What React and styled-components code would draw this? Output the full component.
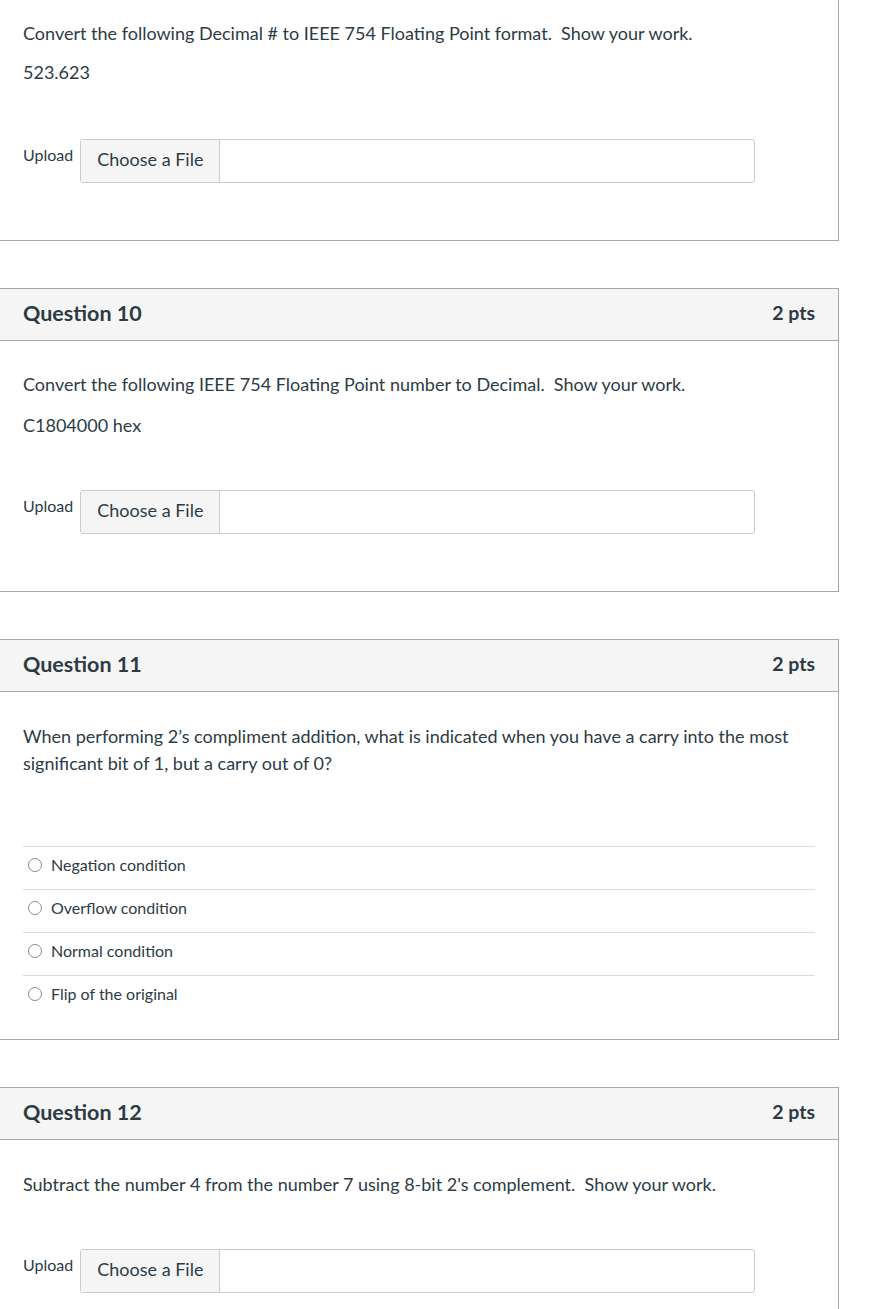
import React from "react";
import styled, { createGlobalStyle } from "styled-components";

const Global = createGlobalStyle`
  html, body { margin: 0; padding: 0; background: #fff; }
  body { font-family: Lato, "Open Sans", "Liberation Sans", sans-serif; color: #2d3b45; }
`;

const Page = styled.div`
  width: 839px;
  display: flex;
  flex-direction: column;
  gap: 47px;
`;

const Card = styled.section`
  border: 1px solid #a8a8a8;
  border-left: none;
  border-top: ${(p) => (p.$partial ? "none" : "1px solid #a8a8a8")};
  background: #fff;
`;

const Header = styled.header`
  height: 47px;
  display: flex;
  align-items: center;
  justify-content: space-between;
  padding: 0 23px 4px;
  background: #f5f5f5;
  border-bottom: 1px solid #a8a8a8;
`;

const Title = styled.h2`
  margin: 0;
  font-size: 21.5px;
  font-weight: 700;
  color: #2d3b45;
`;

const Points = styled.span`
  font-size: 19.5px;
  font-weight: 700;
  color: #2d3b45;
`;

const Body = styled.div`
  padding: ${(p) => p.$top ?? 31}px 23px ${(p) => p.$bottom ?? 57}px 23px;
`;

const Para = styled.p`
  margin: 0 0 ${(p) => p.$gap ?? 14}px;
  font-size: 18px;
  line-height: 27px;
  &:last-of-type { margin-bottom: 0; }
`;

const UploadRow = styled.div`
  display: flex;
  align-items: flex-start;
  gap: 7px;
  margin-top: ${(p) => p.$top}px;
`;

const UploadLabel = styled.span`
  font-size: 16px;
  line-height: 20px;
  margin-top: 6px;
`;

const FileBox = styled.div`
  width: 673px;
  height: 42px;
  border: 1px solid #c7cdd1;
  border-radius: 3px;
  display: flex;
  background: #fff;
`;

const FileButton = styled.button`
  height: 42px;
  margin: 0;
  padding: 0 16px 4px;
  background: #f5f5f5;
  border: none;
  border-right: 1px solid #c7cdd1;
  border-radius: 3px 0 0 3px;
  font-family: inherit;
  font-size: 18px;
  color: #2d3b45;
  cursor: pointer;
`;

const Answers = styled.ul`
  list-style: none;
  margin: 69px 0 0;
  padding: 0;
`;

const Answer = styled.li`
  height: 34px;
  padding: 8px 0 0 5px;
  display: flex;
  align-items: flex-start;
  gap: 9px;
  border-top: 1px solid #dcdcdc;
  font-size: 16px;
  line-height: 20px;
  color: #2d3b45;
`;

const Radio = styled.span`
  width: 12px;
  height: 12px;
  margin-top: 3px;
  border: 1px solid #8a8a8a;
  border-radius: 50%;
  background: #fff;
  flex: none;
`;

function Upload({ top }) {
  return (
    <UploadRow $top={top}>
      <UploadLabel>Upload</UploadLabel>
      <FileBox>
        <FileButton type="button">Choose a File</FileButton>
      </FileBox>
    </UploadRow>
  );
}

function QHeader({ n }) {
  return (
    <Header>
      <Title>Question {n}</Title>
      <Points>2 pts</Points>
    </Header>
  );
}

export default function App() {
  return (
    <>
      <Global />
      <Page>
        <Card $partial>
          <Body $top={20}>
            <Para $gap={12}>Convert the following Decimal # to IEEE 754 Floating Point format.&nbsp; Show your work.</Para>
            <Para>523.623</Para>
            <Upload top={53} />
          </Body>
        </Card>

        <Card>
          <QHeader n={10} />
          <Body $top={30}>
            <Para>Convert the following IEEE 754 Floating Point number to Decimal.&nbsp; Show your work.</Para>
            <Para>C1804000 hex</Para>
            <Upload top={51} />
          </Body>
        </Card>

        <Card>
          <QHeader n={11} />
          <Body $bottom={21}>
            <Para>
              When performing 2’s compliment addition, what is indicated when you have a carry into the most significant bit of 1, but a carry out of 0?
            </Para>
            <Answers>
              {["Negation condition", "Overflow condition", "Normal condition", "Flip of the original"].map((a) => (
                <Answer key={a}>
                  <Radio />
                  {a}
                </Answer>
              ))}
            </Answers>
          </Body>
        </Card>

        <Card>
          <QHeader n={12} />
          <Body>
            <Para>Subtract the number 4 from the number 7 using 8-bit 2's complement.&nbsp; Show your work.</Para>
            <Upload top={51} />
          </Body>
        </Card>
      </Page>
    </>
  );
}
